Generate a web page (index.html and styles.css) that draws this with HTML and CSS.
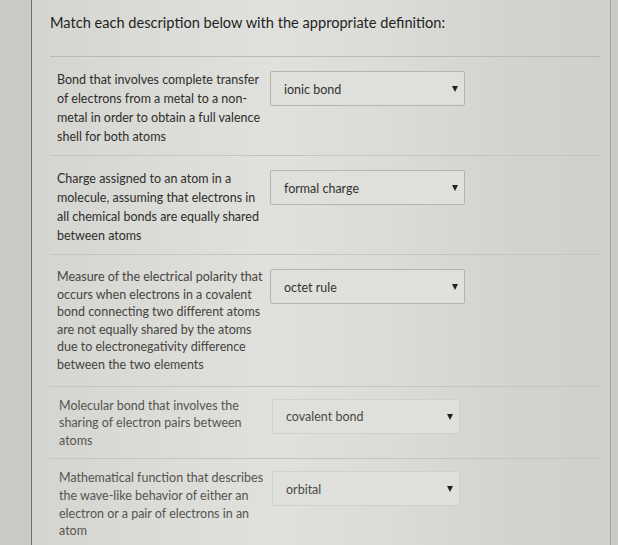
FILE: index.html
```html
<!DOCTYPE html>
<html lang="en">
<head>
    <meta charset="UTF-8">
    <title>Match</title>
    <link rel="stylesheet" href="styles.css">
</head>
<body>
<div id="panel">
    <h1 class="prompt">Match each description below with the appropriate definition:</h1>
    <ul id="pairs">
        <li class="pair">
            <p class="desc">Bond that involves complete transfer<br>of electrons from a metal to a non-<br>metal in order to obtain a full valence<br>shell for both atoms</p>
            <span class="pick"><select><option>ionic bond</option></select></span>
        </li>
        <li class="pair">
            <p class="desc">Charge assigned to an atom in a<br>molecule, assuming that electrons in<br>all chemical bonds are equally shared<br>between atoms</p>
            <span class="pick"><select><option>formal charge</option></select></span>
        </li>
        <li class="pair far">
            <p class="desc">Measure of the electrical polarity that<br>occurs when electrons in a covalent<br>bond connecting two different atoms<br>are not equally shared by the atoms<br>due to electronegativity difference<br>between the two elements</p>
            <span class="pick"><select><option>octet rule</option></select></span>
        </li>
        <li class="pair far low">
            <p class="desc">Molecular bond that involves the<br>sharing of electron pairs between<br>atoms</p>
            <span class="pick faint"><select><option>covalent bond</option></select></span>
        </li>
        <li class="pair far low">
            <p class="desc">Mathematical function that describes<br>the wave-like behavior of either an<br>electron or a pair of electrons in an<br>atom</p>
            <span class="pick faint"><select><option>orbital</option></select></span>
        </li>
    </ul>
</div>
</body>
</html>
```

FILE: styles.css
```css
*{
    margin: 0;
    padding: 0;
    border: 0;
    list-style: none;
}
body{
    background: #c9c9c5;
    font-family: Lato, "Open Sans", sans-serif;
    height: 545px;
    overflow: hidden;
}
#panel{
    margin-left: 31px;
    width: 580px;
    height: 545px;
    border-left: 1px solid #6f6f6c;
    border-right: 1px solid #a3a3a0;
    background: linear-gradient(to right, #d4d4d0 0%, #dcdcd8 25%, #e0e0dc 42%, #dbdbd7 62%, #d3d3cf 82%, #cfcfcb 100%);
    padding: 0 10px 0 18px;
    box-sizing: border-box;
}
.prompt{
    font-size: 14.6px;
    font-weight: normal;
    color: #1f1f1f;
    line-height: 20px;
    padding-top: 13px;
    height: 43px;
}
#pairs{
    border-top: 1px solid #b9b9b5;
}
.pair{
    display: flex;
    align-items: flex-start;
    gap: 4px;
    padding: 13px 0 9px 7px;
    border-bottom: 1px solid #c4c4c0;
}
.pair:last-child{
    border-bottom: 0;
}
.desc{
    width: 209px;
    font-size: 12.5px;
    line-height: 19px;
    color: #2e2e2c;
    white-space: nowrap;
}
.far .desc{
    line-height: 17.6px;
    color: #45453f;
}
.far{
    padding-bottom: 12px;
}
.low{
    padding: 10px 0 9px 9px;
}
.low .desc{
    color: #55554f;
}
.pick{
    position: relative;
    display: block;
    width: 195px;
    margin-top: 1px;
}
.low .pick{
    margin-top: 2px;
    width: 188px;
}
.pick select{
    appearance: none;
    -webkit-appearance: none;
    width: 100%;
    height: 35px;
    padding: 1px 20px 0 13px;
    font-family: Lato, "Open Sans", sans-serif;
    font-size: 12.5px;
    color: #333330;
    background: #dfdfdb;
    border: 1px solid #b3b3af;
    border-radius: 2px;
    box-sizing: border-box;
    outline: none;
}
.pick.faint select{
    border-color: #d0d0cc;
    color: #4a4a47;
}
.pick::after{
    content: "";
    position: absolute;
    right: 7px;
    top: 15px;
    border-left: 3px solid transparent;
    border-right: 3px solid transparent;
    border-top: 6px solid #222;
}
```
